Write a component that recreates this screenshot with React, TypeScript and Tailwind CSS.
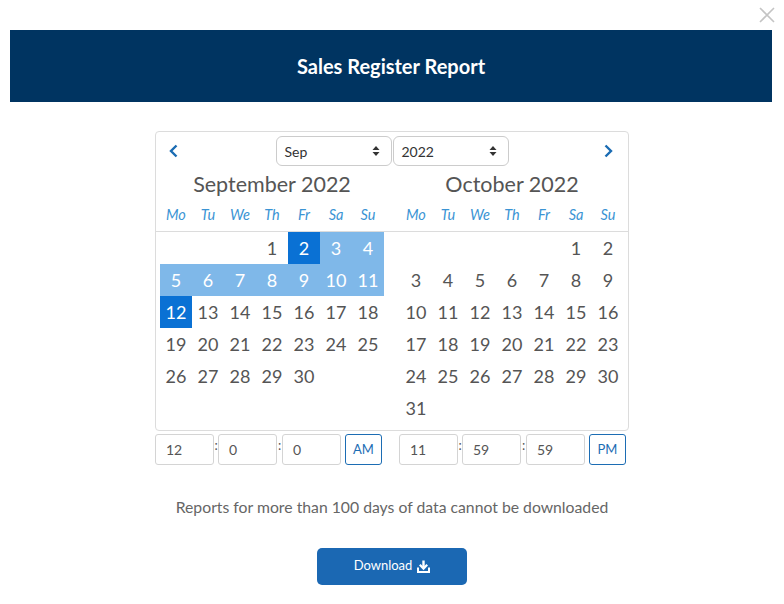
import React from "react";

const weekdays = ["Mo", "Tu", "We", "Th", "Fr", "Sa", "Su"];

// leading blanks + day count for each month shown
const months = [
  { title: "September 2022", offset: 3, days: 30, key: "sep" },
  { title: "October 2022", offset: 5, days: 31, key: "oct" },
];

function cellClass(month: string, day: number) {
  if (month === "sep" && (day === 2 || day === 12)) return "bg-[#0a71d4] text-white";
  if (month === "sep" && day > 2 && day < 12) return "bg-[#7fb8e9] text-white";
  return "text-[#555]";
}

function Caret() {
  return (
    <svg width="8" height="12" viewBox="0 0 8 12" className="shrink-0">
      <path d="M4 1 L7.5 5 H0.5 Z" fill="#333" />
      <path d="M4 11 L7.5 7 H0.5 Z" fill="#333" />
    </svg>
  );
}

function Select({ value, width }: { value: string; width: string }) {
  return (
    <div
      className={`flex h-[30px] ${width} items-center justify-between rounded-[6px] border border-[#ccc] bg-white pl-[8px] pr-[11px] text-[14px] text-[#333]`}
    >
      <span>{value}</span>
      <Caret />
    </div>
  );
}

function TimeInput({ value }: { value: string }) {
  return (
    <div className="flex h-[31px] w-[59px] items-center rounded-[3px] border border-[#d4d4d4] pl-[10px] text-[14px] text-[#555]">
      {value}
    </div>
  );
}

function TimeGroup({ h, m, s, ampm }: { h: string; m: string; s: string; ampm: string }) {
  return (
    <div className="flex items-center">
      <TimeInput value={h} />
      <span className="w-[4px] text-center text-[13px] leading-none text-[#555] -mt-[8px]">:</span>
      <TimeInput value={m} />
      <span className="w-[5px] text-center text-[13px] leading-none text-[#555] -mt-[8px]">:</span>
      <TimeInput value={s} />
      <div className="ml-[4px] flex h-[31px] w-[37px] items-center justify-center rounded-[3px] border border-[#1c6db4] text-[13px] text-[#1c6db4]">
        {ampm}
      </div>
    </div>
  );
}

export default function App() {
  return (
    <div
      className="relative min-h-[604px] w-[784px] bg-white"
      style={{ fontFamily: "Lato, 'Open Sans', sans-serif" }}
    >
      {/* close */}
      <svg className="absolute right-[9px] top-[7px]" width="16" height="16" viewBox="0 0 16 16">
        <path d="M1 1 L15 15 M15 1 L1 15" stroke="#c4c4c4" strokeWidth="1.6" />
      </svg>

      <div className="h-[30px]" />
      <div className="ml-[10px] mr-[12px] flex h-[72px] items-center justify-center bg-[#003461]">
        <h1 className="text-[20px] font-bold text-white">Sales Register Report</h1>
      </div>

      {/* calendar */}
      <div className="mx-auto mt-[29px] w-[474px] rounded-[4px] border border-[#dcdcdc]">
        <div className="border-b border-[#dcdcdc] px-[4px]">
          <div className="grid h-[37px] grid-cols-[1fr_auto_1fr] items-start pt-[4px]">
            <div className="pl-[8px] pt-[8px]">
              <svg width="11" height="14" viewBox="0 0 11 14">
                <path d="M8.5 1.5 L3 7 L8.5 12.5" stroke="#1a6cb3" strokeWidth="2.4" fill="none" />
              </svg>
            </div>
            <div className="flex gap-[1px]">
              <Select value="Sep" width="w-[116px]" />
              <Select value="2022" width="w-[116px]" />
            </div>
            <div className="flex justify-end pr-[10px] pt-[8px]">
              <svg width="11" height="14" viewBox="0 0 11 14">
                <path d="M2.5 1.5 L8 7 L2.5 12.5" stroke="#1a6cb3" strokeWidth="2.4" fill="none" />
              </svg>
            </div>
          </div>
          <div className="flex gap-[16px]">
            {months.map((mo) => (
              <div key={mo.key} className="w-[224px]">
                <div className="flex h-[30px] items-center justify-center text-[21.5px] text-[#555]">
                  {mo.title}
                </div>
                <div className="grid h-[32px] grid-cols-7 items-center">
                  {weekdays.map((w) => (
                    <div key={w} className="text-center text-[14.5px] italic text-[#3b94d4]">
                      {w}
                    </div>
                  ))}
                </div>
              </div>
            ))}
          </div>
        </div>

        <div className="flex gap-[16px] px-[4px] pb-[6px]">
          {months.map((mo) => {
            const cells: (number | null)[] = [];
            for (let i = 0; i < mo.offset; i++) cells.push(null);
            for (let d = 1; d <= mo.days; d++) cells.push(d);
            while (cells.length < 42) cells.push(null);
            return (
              <div key={mo.key} className="grid w-[224px] grid-cols-7">
                {cells.map((d, i) => (
                  <div
                    key={i}
                    className={`flex h-[32px] items-center justify-center text-[18px] ${
                      d ? cellClass(mo.key, d) : ""
                    }`}
                  >
                    {d ?? ""}
                  </div>
                ))}
              </div>
            );
          })}
        </div>
      </div>

      {/* time */}
      <div className="mx-auto mt-[3px] flex w-[474px] gap-[17px]">
        <TimeGroup h="12" m="0" s="0" ampm="AM" />
        <TimeGroup h="11" m="59" s="59" ampm="PM" />
      </div>

      <p className="mt-[30px] text-center text-[15.75px] text-[#666]">
        Reports for more than 100 days of data cannot be downloaded
      </p>

      <div className="mt-[29px] flex justify-center">
        <button className="flex h-[37px] w-[150px] items-center justify-center gap-[5px] rounded-[5px] bg-[#1b68b3] text-[13px] text-white">
          Download
          <svg width="13" height="13" viewBox="0 0 13 13">
            <path d="M6.5 0.5 V7" stroke="white" strokeWidth="2.4" />
            <path d="M2.8 4.8 L6.5 8.6 L10.2 4.8" stroke="white" strokeWidth="2.2" fill="none" />
            <path d="M1 7.5 V12 H12 V7.5" stroke="white" strokeWidth="2" fill="none" />
          </svg>
        </button>
      </div>
    </div>
  );
}
